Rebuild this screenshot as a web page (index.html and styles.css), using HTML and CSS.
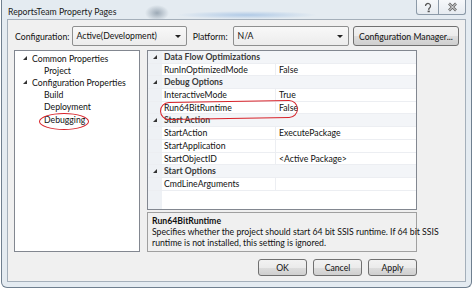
FILE: index.html
```html
<html>
	<head>
		<meta charset="utf8"/>
		<title>ReportsTeam Property Pages</title>
		<link rel="stylesheet" href="styles.css">
	</head>
	<body>
		<div class="window">
			<div class="titlebar">
				<span class="title">ReportsTeam Property Pages</span>
				<div class="captionButtons">
					<span class="captionButton help">
						<svg width="10" height="11" viewBox="0 0 10 11">
							<path d="M2.5 4 A2.5 2.5 0 1 1 6.5 6 L5.8 6.8 L5.8 8" fill="none" stroke="#555" stroke-width="1.2"/>
							<rect x="4.6" y="8.6" width="2.2" height="1.6" fill="#555"/>
						</svg>
					</span>
					<span class="captionButton close">
						<svg width="11" height="10" viewBox="0 0 11 10">
							<path d="M2 1.5 L9 8.5 M9 1.5 L2 8.5" stroke="#666" stroke-width="2.6"/>
							<path d="M2 1.5 L9 8.5 M9 1.5 L2 8.5" stroke="#f4f6f8" stroke-width="1"/>
						</svg>
					</span>
				</div>
			</div>
			<div class="client">
				<div class="toolbar">
					<span class="label">Configuration:</span>
					<div class="select configSelect">Active(Development)<span class="arrow"></span></div>
					<span class="label platformLabel">Platform:</span>
					<div class="select platformSelect">N/A<span class="arrow"></span></div>
					<div class="button managerButton">Configuration Manager...</div>
				</div>
				<div class="main">
					<div class="tree">
						<div class="node"><span class="expander"></span>Common Properties</div>
						<div class="node child">Project</div>
						<div class="node"><span class="expander"></span>Configuration Properties</div>
						<div class="node child">Build</div>
						<div class="node child">Deployment</div>
						<div class="node child">Debugging</div>
					</div>
					<div class="rightPane">
						<div class="grid">
							<div class="row category"><span class="gutter"><span class="expander"></span></span><span class="catName">Data Flow Optimizations</span></div>
							<div class="row"><span class="gutter"></span><span class="name">RunInOptimizedMode</span><span class="value">False</span></div>
							<div class="row category"><span class="gutter"><span class="expander"></span></span><span class="catName">Debug Options</span></div>
							<div class="row"><span class="gutter"></span><span class="name">InteractiveMode</span><span class="value">True</span></div>
							<div class="row"><span class="gutter"></span><span class="name">Run64BitRuntime</span><span class="value">False</span></div>
							<div class="row category"><span class="gutter"><span class="expander"></span></span><span class="catName">Start Action</span></div>
							<div class="row"><span class="gutter"></span><span class="name">StartAction</span><span class="value">ExecutePackage</span></div>
							<div class="row"><span class="gutter"></span><span class="name">StartApplication</span><span class="value"></span></div>
							<div class="row"><span class="gutter"></span><span class="name">StartObjectID</span><span class="value">&lt;Active Package&gt;</span></div>
							<div class="row category"><span class="gutter"><span class="expander"></span></span><span class="catName">Start Options</span></div>
							<div class="row"><span class="gutter"></span><span class="name">CmdLineArguments</span><span class="value"></span></div>
							<div class="gridRest"><span class="gutter"></span></div>
						</div>
						<div class="description">
							<div class="descTitle">Run64BitRuntime</div>
							<div class="descText">Specifies whether the project should start 64 bit SSIS runtime. If 64 bit SSIS<br>runtime is not installed, this setting is ignored.</div>
						</div>
					</div>
				</div>
				<div class="dialogButtons">
					<div class="button">OK</div>
					<div class="button">Cancel</div>
					<div class="button">Apply</div>
				</div>
			</div>
		</div>
		<div class="mark markDebugging"></div>
		<div class="mark markRuntime"></div>
	</body>
</html>
```

FILE: styles.css
```css
* {
	box-sizing : border-box;
}

body {
	margin      : 0;
	background  : #fff;
	font-family : 'Lato', sans-serif;
	font-size   : 8.7px;
	color       : #111;
}

.window {
	display        : flex;
	flex-direction : column;
	width          : 471px;
	height         : 288px;
	margin-left    : 1px;
	padding        : 0 5px 5px 5px;
	border         : 1px solid #6f7f8f;
	border-top     : none;
	border-radius  : 0 0 6px 6px;
	background     : #e4ebf1;
}

.titlebar {
	display     : flex;
	align-items : flex-start;
	height      : 21px;
	background  :
		radial-gradient(ellipse 12px 8px at 150px 13px, rgba(70, 90, 110, .45), transparent),
		radial-gradient(ellipse 70px 4px at 240px 15px, rgba(80, 140, 210, .35), transparent);
}

.title {
	margin-top  : 6px;
	margin-left : 1px;
	color       : #1a1a1a;
}

.captionButtons {
	display     : flex;
	margin-left : auto;
}

.captionButton {
	display         : flex;
	align-items     : center;
	justify-content : center;
	height          : 15px;
	border          : 1px solid #8c9aa8;
	border-top      : none;
	background      : linear-gradient(#f6f8fa, #e6ebf0);
}

.help {
	width         : 23px;
	border-radius : 0 0 0 3px;
}

.close {
	width         : 27px;
	border-left   : none;
	border-radius : 0 0 3px 0;
}

.client {
	display        : flex;
	flex-direction : column;
	flex           : 1;
	padding        : 6px 6px 5px 6px;
	border         : 1px solid #a4afba;
	background     : #f0f0f0;
}

.toolbar {
	display     : flex;
	align-items : center;
	height      : 20px;
}

.label {
	margin-left : 1px;
}

.label:first-child {
	width : 57px;
}

.select {
	position      : relative;
	height        : 20px;
	padding       : 0 4px;
	line-height   : 18px;
	border        : 1px solid #8e8f8f;
	border-radius : 2px;
	background    : linear-gradient(#f8f8f8, #ececec);
}

.arrow {
	position     : absolute;
	right        : 5px;
	top          : 8px;
	border-left  : 3px solid transparent;
	border-right : 3px solid transparent;
	border-top   : 3px solid #222;
}

.configSelect {
	width : 116px;
}

.platformLabel {
	width       : 40px;
	margin-left : 6px;
}

.platformSelect {
	width : 117px;
}

.button {
	display         : flex;
	align-items     : center;
	justify-content : center;
	border          : 1px solid #707070;
	border-radius   : 3px;
	background      : linear-gradient(#f2f2f2 0%, #ebebeb 50%, #dddddd 51%, #cfcfcf 100%);
}

.managerButton {
	width       : 107px;
	height      : 20px;
	margin-left : 4px;
}

.main {
	display    : flex;
	gap        : 7px;
	height     : 202px;
	margin-top : 4px;
}

.tree {
	width       : 126px;
	padding-top : 1px;
	border      : 1px solid #828790;
	background  : #fff;
}

.node {
	display      : flex;
	align-items  : center;
	height       : 12.2px;
	padding-left : 8px;
}

.child {
	padding-left : 29px;
}

.expander {
	display      : inline-block;
	width        : 0;
	height       : 0;
	margin-right : 5px;
	border-top   : 4px solid transparent;
	border-right : 4px solid #333;
}

.rightPane {
	display        : flex;
	flex-direction : column;
	gap            : 2px;
	width          : 270px;
}

.grid {
	display        : flex;
	flex-direction : column;
	height         : 160px;
	border         : 1px solid #828790;
	background     : #fff;
}

.row {
	display       : flex;
	align-items   : stretch;
	height        : 12.7px;
	line-height   : 12.7px;
	border-bottom : 1px solid #eceef2;
}

.gutter {
	display         : flex;
	align-items     : center;
	justify-content : center;
	width           : 14px;
	background      : #eef1f5;
}

.gutter .expander {
	margin-right : 0;
}

.category {
	background : #f3f5f8;
}

.catName {
	padding-left : 2px;
	font-weight  : bold;
	color        : #3a3a3a;
}

.name {
	width        : 114px;
	padding-left : 2px;
	border-right : 1px solid #eceef2;
}

.value {
	padding-left : 3px;
}

.gridRest {
	display : flex;
	flex    : 1;
}

.description {
	height     : 40px;
	padding    : 2px 4px;
	border     : 1px solid #a0a0a0;
	background : #f0f0f0;
}

.descTitle {
	font-weight : bold;
	line-height : 12px;
}

.descText {
	line-height : 10.5px;
	white-space : nowrap;
}

.dialogButtons {
	display         : flex;
	justify-content : flex-end;
	gap             : 6px;
	width           : 403px;
	margin-top      : 7px;
}

.dialogButtons .button {
	width  : 49px;
	height : 17px;
}

.mark {
	position : absolute;
	border   : 1.5px solid #d8232a;
}

.markDebugging {
	left          : 39px;
	top           : 113px;
	width         : 50px;
	height        : 17px;
	border-radius : 50%;
}

.markRuntime {
	left          : 160px;
	top           : 101px;
	width         : 138px;
	height        : 18px;
	border-radius : 9px;
	transform     : rotate(-1deg);
}
```
